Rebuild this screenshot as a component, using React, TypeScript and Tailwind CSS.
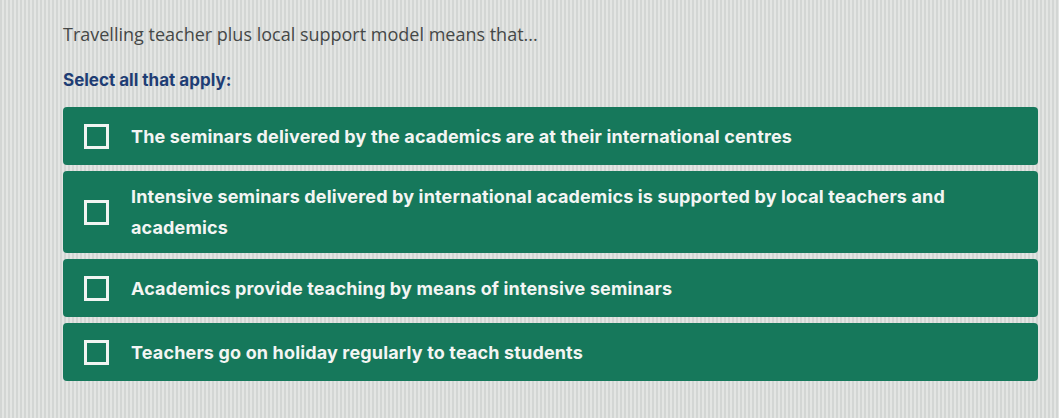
import React from "react";

const options = [
  { text: "The seminars delivered by the academics are at their international centres", h: "h-[58px]" },
  {
    text: "Intensive seminars delivered by international academics is supported by local teachers and academics",
    h: "h-[82px]",
  },
  { text: "Academics provide teaching by means of intensive seminars", h: "h-[58px]" },
  { text: "Teachers go on holiday regularly to teach students", h: "h-[58px]" },
];

export default function App() {
  return (
    <div className="w-[1059px] h-[418px] overflow-hidden bg-[#d8dad9] bg-[repeating-linear-gradient(90deg,#d3d6d4_0px,#d3d6d4_2px,#e3e5e3_2px,#e3e5e3_4px)] pl-[63px] pr-[21px] pt-[21px] font-['Inter','Liberation_Sans',sans-serif]">
      <p className="text-[18px] leading-[26px] text-[#454847] font-['Open_Sans','Liberation_Sans',sans-serif]">
        Travelling teacher plus local support model means that...
      </p>
      <p className="mt-[20px] text-[17px] leading-[26px] font-bold text-[#1e3d74]">Select all that apply:</p>
      <div className="mt-[14px] flex flex-col gap-[6px]">
        {options.map((o, i) => (
          <div
            key={i}
            className={`${o.h} flex items-center rounded-[4px] bg-[#16785b] pl-[21px] pr-[40px]`}
          >
            <div className="w-[25px] h-[25px] shrink-0 border-[3px] border-[#f1f4f2]" />
            <span className="ml-[22px] text-[18px] leading-[31px] font-bold tracking-[0.15px] text-[#f3f5f3] max-w-[830px]">
              {o.text}
            </span>
          </div>
        ))}
      </div>
    </div>
  );
}
